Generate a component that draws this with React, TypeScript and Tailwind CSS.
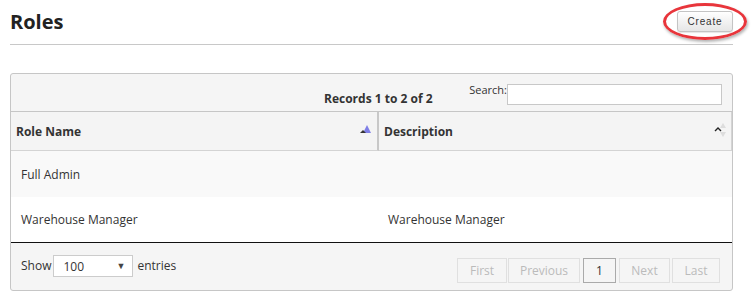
import React from "react";

function SortAsc() {
  return (
    <svg width="12" height="12" viewBox="0 0 12 12">
      <polygon points="7,2 11,10 3,10" fill="#7f7fe6" />
      <polygon points="3,7 6,10 0,10" fill="#333" />
    </svg>
  );
}

function SortBoth() {
  return (
    <svg width="14" height="16" viewBox="0 0 14 16">
      <polygon points="10,1 13,6 7,6" fill="#ddd" />
      <polygon points="10,15 13,10 7,10" fill="#ddd" />
      <polyline points="2,9 5,6 8,9" fill="none" stroke="#222" strokeWidth="1.4" />
    </svg>
  );
}

export default function App() {
  return (
    <div className="relative w-[753px] h-[298px] bg-white font-['Open_Sans',sans-serif] text-[12px] text-[#333]">
      <div className="ml-[10px] w-[723px]">
        <div className="h-[45px] flex items-center justify-between border-b border-[#c8c8c8]">
          <h1 className="text-[20px] font-bold text-[#222] leading-none mt-[-1px]">Roles</h1>
          <button className="h-[21px] w-[56px] mt-[-2px] rounded-[3px] border border-[#c4c4c4] bg-gradient-to-b from-[#ffffff] to-[#e6e6e6] text-[10px] tracking-[0.8px] text-[#333] font-['Liberation_Sans',sans-serif] shadow-[0_1px_1px_rgba(0,0,0,0.1)]">
            Create
          </button>
        </div>
        <div className="mt-[28px] border border-[#c6c6c6] rounded-[3px] bg-[#f5f5f5] overflow-hidden">
          <div className="h-[38px] flex items-center border-b border-[#c6c6c6]">
            <div className="w-[313px]"></div>
            <div className="flex-1 font-bold text-[12px] text-[#333] pt-[13px]">
              Records 1 to 2 of 2
            </div>
            <div className="flex items-start mr-[10px] pt-[4px]">
              <span className="text-[11px] text-[#333] mt-[-2px]">Search:</span>
              <input className="w-[215px] h-[21px] border border-[#c8c8c8] bg-white outline-none" />
            </div>
          </div>
          <div className="flex h-[39px] bg-[#f4f4f4]">
            <div className="w-[368px] flex items-center justify-between pl-[5px] pr-[5px] border-r-2 border-[#c8c8c8] border-b border-b-[#d4d4d4]">
              <span className="font-bold mt-[1px]">Role Name</span>
              <span className="mt-[-4px]"><SortAsc /></span>
            </div>
            <div className="flex-1 flex items-center justify-between pl-[5px] pr-[4px] border-b border-[#d4d4d4] border-r border-r-[#d4d4d4]">
              <span className="font-bold mt-[1px]">Description</span>
              <span className="mt-[-3px]"><SortBoth /></span>
            </div>
          </div>
          <div className="flex h-[46px] items-center bg-[#f9f9f9]">
            <div className="w-[368px] pl-[10px] text-[#333] mt-[1px]">Full Admin</div>
            <div className="flex-1 pl-[7px]"></div>
          </div>
          <div className="flex h-[45px] items-center bg-white">
            <div className="w-[368px] pl-[10px] text-[#333]">Warehouse Manager</div>
            <div className="flex-1 pl-[9px] text-[#333]">Warehouse Manager</div>
          </div>
          <div className="h-[48px] border-t border-[#111] flex items-center justify-between pl-[10px] pr-[12px]">
            <div className="flex items-center mt-[-2px]">
              <span className="text-[12px]">Show</span>
              <div className="ml-[2px] w-[80px] h-[22px] bg-white border border-[#ccc] flex items-center justify-between pl-[9px] pr-[7px]">
                <span className="text-[12px] mt-[3px]">100</span>
                <span className="text-[9px] text-[#444]">▼</span>
              </div>
              <span className="ml-[4px] text-[12px]">entries</span>
            </div>
            <div className="flex items-center gap-[1px] text-[12px] mt-[8px]">
              <div className="h-[25px] w-[50px] border border-[#e0e0e0] flex items-center justify-center text-[#bbb]">First</div>
              <div className="h-[25px] w-[72px] border border-[#e0e0e0] flex items-center justify-center text-[#bbb]">Previous</div>
              <div className="h-[25px] w-[33px] ml-[2px] border border-[#aaa] flex items-center justify-center text-[#333]">1</div>
              <div className="h-[25px] w-[51px] ml-[2px] border border-[#e0e0e0] flex items-center justify-center text-[#bbb]">Next</div>
              <div className="h-[25px] w-[48px] ml-[1px] border border-[#e0e0e0] flex items-center justify-center text-[#bbb]">Last</div>
            </div>
          </div>
        </div>
      </div>
      <div className="absolute left-[663px] top-[3px] w-[84px] h-[37px] rounded-[50%] border-[3px] border-[#e8353b] shadow-[1px_2px_3px_rgba(0,0,0,0.3)]"></div>
    </div>
  );
}
